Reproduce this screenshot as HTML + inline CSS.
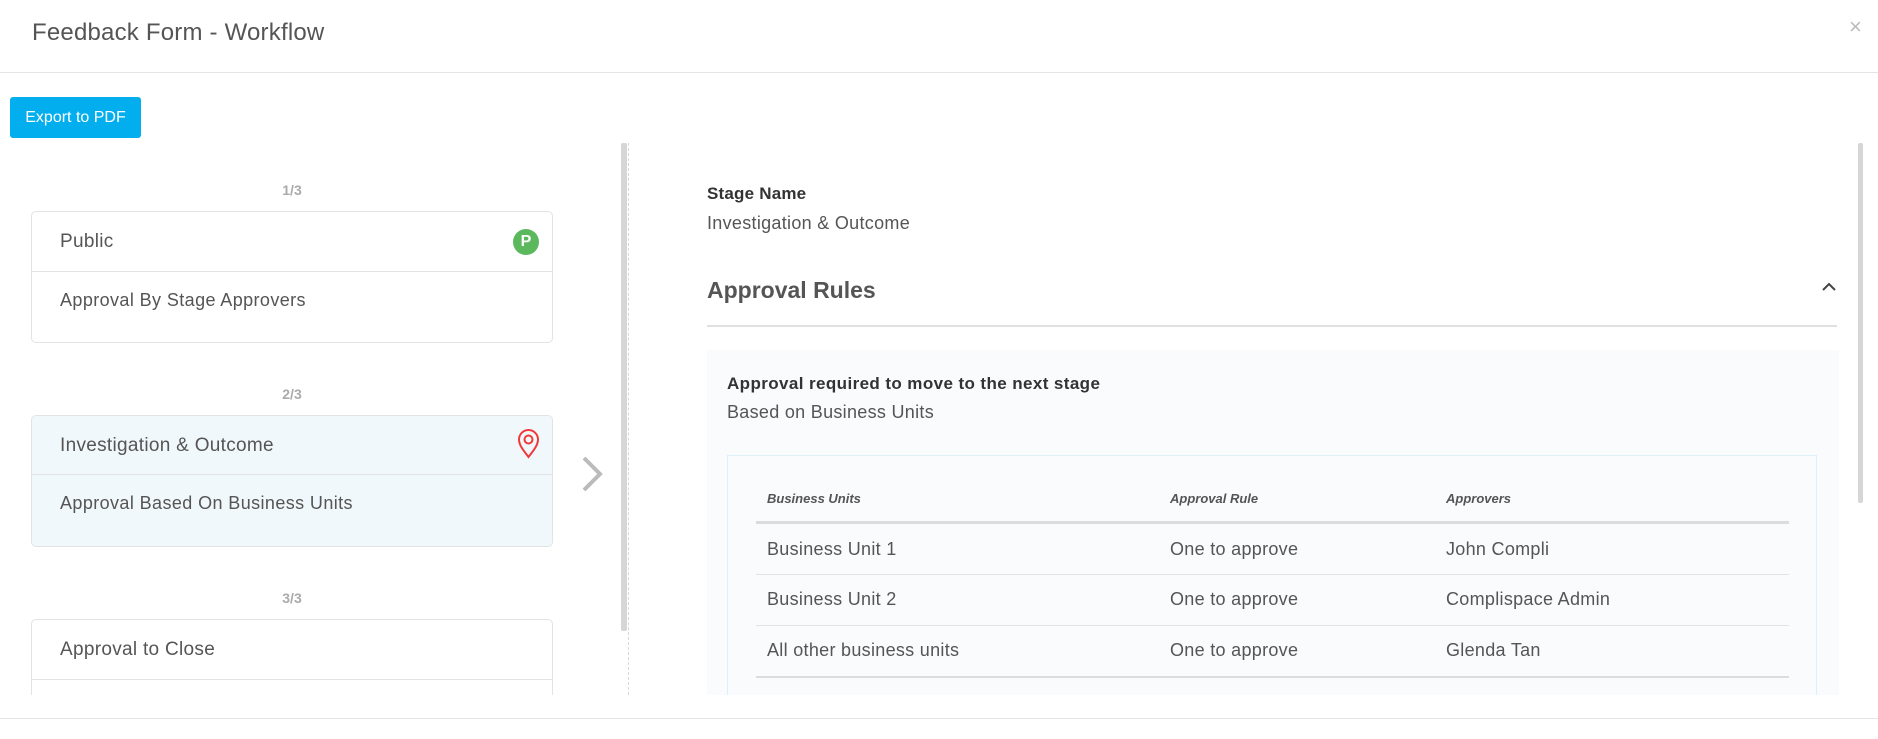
<!DOCTYPE html>
<html><head><meta charset="utf-8"><style>
*{box-sizing:border-box;margin:0;padding:0}
body{width:1878px;height:739px;background:#fff;font-family:"Liberation Sans",sans-serif;color:#555;position:relative;overflow:hidden}
.a{position:absolute;white-space:nowrap}
.card{position:absolute;left:31px;width:522px;border:1px solid #e3e3e3;border-radius:5px;overflow:hidden}
.card .t{position:absolute;left:28px;font-size:19px;color:#555;letter-spacing:0.3px}
.card .d{position:absolute;left:0;right:0;height:1px;background:#e3e3e3}
.card .s{position:absolute;left:28px;font-size:18px;color:#555;letter-spacing:0.4px}
.cnt{position:absolute;left:31px;width:522px;text-align:center;font-size:14px;font-weight:bold;color:#aaa}
.th{font-size:13px;font-style:italic;font-weight:bold;color:#555}
.td{font-size:18px;color:#555;letter-spacing:0.3px}
</style></head><body>
<div class="a" style="left:32px;top:19px;font-size:24px;color:#555;letter-spacing:0.2px">Feedback Form - Workflow</div>
<div class="a" style="left:1849px;top:14px;font-size:22px;color:#bbb">×</div>
<div class="a" style="left:0;top:72px;width:1878px;height:1px;background:#e5e5e5"></div>
<div class="a" style="left:10px;top:97px;width:131px;height:41px;background:#03aeef;border-radius:3px;color:#fff;font-size:16px;line-height:41px;text-align:center">Export to PDF</div>

<div class="cnt" style="top:182px">1/3</div>
<div class="card" style="top:211px;height:132px">
 <div class="t" style="top:19px">Public</div>
 <div class="a" style="left:481px;top:17px;width:26px;height:26px;border-radius:50%;background:#5cb85c;color:#fff;font-weight:bold;font-size:16px;text-align:center;line-height:26px">P</div>
 <div class="d" style="top:59px"></div>
 <div class="s" style="top:78px">Approval By Stage Approvers</div>
</div>
<div class="cnt" style="top:386px">2/3</div>
<div class="card" style="top:415px;height:132px;background:#f1f8fb">
 <div class="t" style="top:19px">Investigation &amp; Outcome</div>
 <svg class="a" style="left:485px;top:13px" width="23" height="30" viewBox="0 0 23 30"><path d="M11.5 28 C6 21 2 16 2 10.5 A9.5 9.5 0 0 1 21 10.5 C21 16 17 21 11.5 28Z" fill="none" stroke="#f03a3a" stroke-width="2"/><circle cx="11.5" cy="10.5" r="4" fill="none" stroke="#f03a3a" stroke-width="2"/></svg>
 <div class="d" style="top:58px"></div>
 <div class="s" style="top:77px">Approval Based On Business Units</div>
</div>
<div class="cnt" style="top:590px">3/3</div>
<div class="card" style="top:619px;height:120px">
 <div class="t" style="top:19px">Approval to Close</div>
 <div class="d" style="top:59px"></div>
</div>
<div class="a" style="left:0;top:695px;width:620px;height:44px;background:#fff"></div>
<svg class="a" style="left:580px;top:455px" width="26" height="38"><path d="M4 3 L20 19 L4 35" fill="none" stroke="#bbb" stroke-width="4"/></svg>
<div class="a" style="left:621px;top:143px;width:6px;height:488px;background:#d6d6d6;border-radius:2px"></div>
<div class="a" style="left:628px;top:143px;height:552px;border-left:1px dashed #d8d8d8"></div>

<div class="a" style="left:707px;top:184px;font-size:17px;font-weight:bold;color:#333;letter-spacing:0.2px">Stage Name</div>
<div class="a" style="left:707px;top:213px;font-size:18px;letter-spacing:0.3px">Investigation &amp; Outcome</div>
<div class="a" style="left:707px;top:277px;font-size:23px;font-weight:bold;color:#555">Approval Rules</div>
<svg class="a" style="left:1821px;top:281px" width="16" height="12"><path d="M2 9 L8 3 L14 9" fill="none" stroke="#444" stroke-width="2"/></svg>
<div class="a" style="left:707px;top:325px;width:1130px;height:2px;background:#e0e0e0"></div>
<div class="a" style="left:707px;top:350px;width:1132px;height:389px;background:#fafbfc"></div>
<div class="a" style="left:727px;top:374px;font-size:17px;font-weight:bold;color:#333;letter-spacing:0.4px">Approval required to move to the next stage</div>
<div class="a" style="left:727px;top:402px;font-size:18px;letter-spacing:0.3px">Based on Business Units</div>
<div class="a" style="left:727px;top:455px;width:1090px;height:284px;border:1px solid #dff0f8;border-bottom:none"></div>
<div class="a th" style="left:767px;top:491px">Business Units</div>
<div class="a th" style="left:1170px;top:491px">Approval Rule</div>
<div class="a th" style="left:1446px;top:491px">Approvers</div>
<div class="a" style="left:756px;top:521px;width:1033px;height:3px;background:#dcdcdc"></div>
<div class="a td" style="left:767px;top:539px">Business Unit 1</div>
<div class="a td" style="left:1170px;top:539px">One to approve</div>
<div class="a td" style="left:1446px;top:539px">John Compli</div>
<div class="a" style="left:756px;top:574px;width:1033px;height:1px;background:#e3e3e3"></div>
<div class="a td" style="left:767px;top:589px">Business Unit 2</div>
<div class="a td" style="left:1170px;top:589px">One to approve</div>
<div class="a td" style="left:1446px;top:589px">Complispace Admin</div>
<div class="a" style="left:756px;top:625px;width:1033px;height:1px;background:#e3e3e3"></div>
<div class="a td" style="left:767px;top:640px">All other business units</div>
<div class="a td" style="left:1170px;top:640px">One to approve</div>
<div class="a td" style="left:1446px;top:640px">Glenda Tan</div>
<div class="a" style="left:756px;top:676px;width:1033px;height:2px;background:#dcdcdc"></div>
<div class="a" style="left:1858px;top:143px;width:5px;height:360px;background:#d6d6d6;border-radius:2px"></div>
<div class="a" style="left:0;top:695px;width:1878px;height:44px;background:#fff"></div>
<div class="a" style="left:0;top:718px;width:1878px;height:1px;background:#e5e5e5"></div>
</body></html>
